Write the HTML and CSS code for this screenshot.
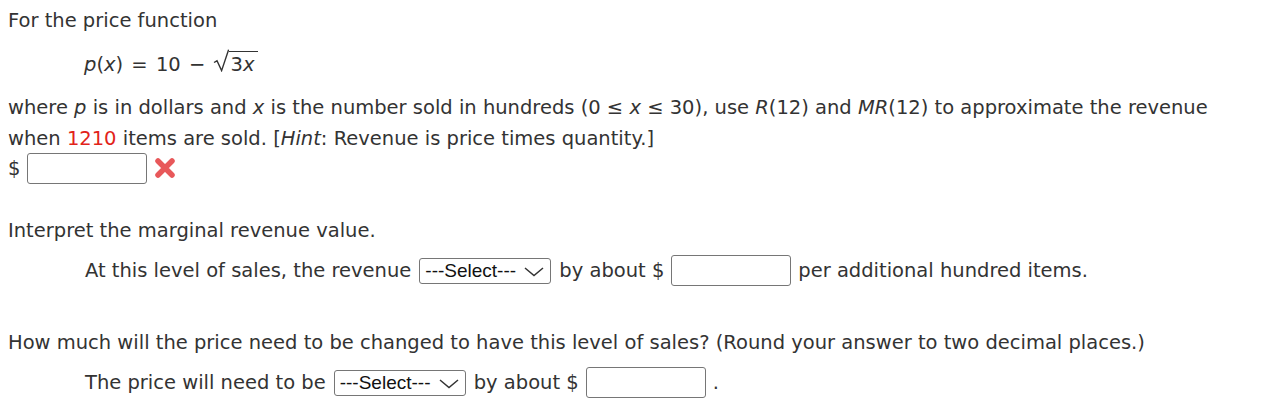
FILE: index.html
```html
<!DOCTYPE html>
<html>
<head>
<meta charset="utf-8">
<link rel="stylesheet" href="styles.css">
</head>
<body>
<div class="question">
  <p class="line">For the price function</p>
  <div class="formula">
    <span class="it">p</span>(<span class="it">x</span>) <span class="op">=</span> 10 <span class="op">−</span> <svg class="radical" width="16" height="23" viewBox="0 0 16 23"><path d="M1 13.5 L4 11.8 L8.6 21.6 L15.6 0.7" fill="none" stroke="#333" stroke-width="1.4"/></svg><span class="radicand">3<span class="it">x</span></span>
  </div>
  <p class="para">where <span class="it">p</span> is in dollars and <span class="it">x</span> is the number sold in hundreds (0 ≤ <span class="it">x</span> ≤ 30), use <span class="it">R</span>(12) and <span class="it">MR</span>(12) to approximate the revenue when <span class="red">1210</span> items are sold. [<span class="it">Hint</span>: Revenue is price times quantity.]</p>
  <div class="answer-row">
    <span>$</span>
    <input class="box" type="text">
    <svg class="xmark" width="22" height="22" viewBox="0 0 22 22"><path d="M4 4 L18 18 M18 4 L4 18" stroke="#e8585a" stroke-width="5.5" stroke-linecap="round"/></svg>
  </div>
  <p class="section">Interpret the marginal revenue value.</p>
  <div class="indent-row">
    <span>At this level of sales, the revenue</span>
    <span class="selwrap"><select class="sel"><option>---Select---</option></select><svg class="chev" width="20" height="10" viewBox="0 0 20 10"><path d="M1 1 L10 8.5 L19 1" fill="none" stroke="#333" stroke-width="1.5"/></svg></span>
    <span>by about $</span>
    <input class="box" type="text">
    <span>per additional hundred items.</span>
  </div>
  <p class="section2">How much will the price need to be changed to have this level of sales? (Round your answer to two decimal places.)</p>
  <div class="indent-row">
    <span>The price will need to be</span>
    <span class="selwrap"><select class="sel"><option>---Select---</option></select><svg class="chev" width="20" height="10" viewBox="0 0 20 10"><path d="M1 1 L10 8.5 L19 1" fill="none" stroke="#333" stroke-width="1.5"/></svg></span>
    <span>by about $</span>
    <input class="box" type="text">
    <span>.</span>
  </div>
</div>
</body>
</html>
```
FILE: styles.css
```css
body {
  margin: 0;
  background: #fff;
}
.question {
  padding: 9px 8px 0 8px;
  font-family: "DejaVu Sans", Verdana, sans-serif;
  font-size: 19.5px;
  color: #333;
  line-height: 31px;
}
.line {
  margin: 0;
  line-height: 24px;
}
.formula {
  margin: 16px 0 0 76px;
  line-height: 28px;
  height: 28px;
}
.it { font-style: italic; }
.red { color: #e2231a; }
.op { margin: 0 2px; }
.radical {
  vertical-align: -1px;
  margin-left: 0;
}
.radicand {
  display: inline-block;
  border-top: 1.3px solid #333;
  padding: 0 4px 0 1px;
  line-height: 26px;
}
.para {
  margin: 15px 0 0 0;
}
.answer-row {
  display: flex;
  align-items: center;
  gap: 7px;
  margin-top: -2px;
  height: 32px;
}
.box {
  width: 120px;
  height: 31px;
  box-sizing: border-box;
  border: 1px solid #767676;
  border-radius: 3px;
  margin: 0;
  padding: 0;
  background: #fff;
}
.section {
  margin: 31px 0 0 0;
}
.section2 {
  margin: 41px 0 0 0;
}
.indent-row {
  display: flex;
  align-items: center;
  gap: 7px;
  margin-left: 77px;
  margin-top: 9px;
  height: 31px;
}
.selwrap {
  position: relative;
  display: inline-block;
  height: 26px;
  margin: 0 1px;
}
.sel {
  -webkit-appearance: none;
  appearance: none;
  font-family: "Liberation Sans", Arial, sans-serif;
  font-size: 19px;
  width: 132px;
  height: 26px;
  line-height: 24px;
  color: #111;
  border: 1px solid #767676;
  border-radius: 3px;
  background: #fff;
  padding: 0 0 0 5px;
  margin: 0;
  display: block;
}
.chev {
  position: absolute;
  right: 7px;
  top: 9px;
  pointer-events: none;
}
```
